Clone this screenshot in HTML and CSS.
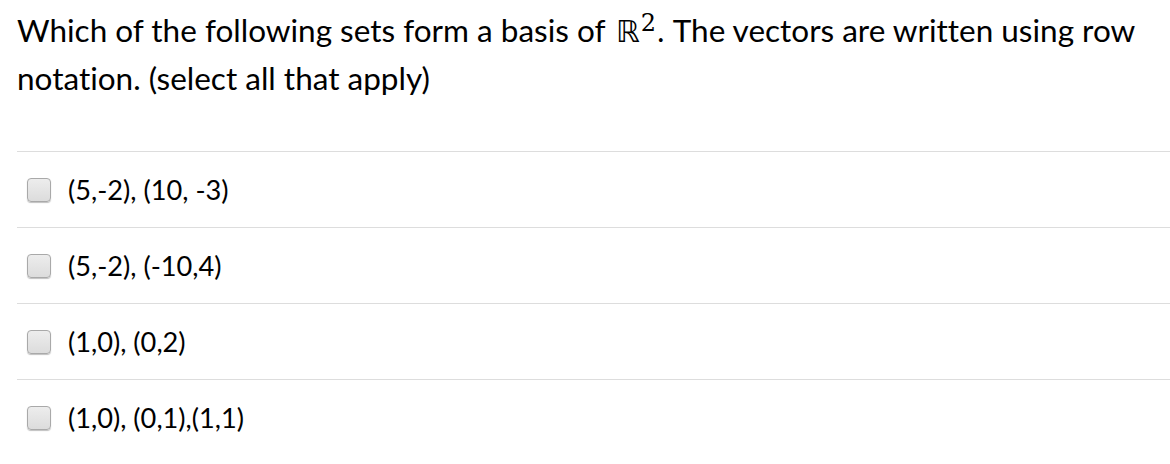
FILE: index.html
```html
<!DOCTYPE html>
<html>
<head>
<meta charset="utf-8">
<link rel="stylesheet" href="styles.css">
</head>
<body>
<div class="question">
  <p class="prompt">Which of the following sets form a basis of <span class="math"><span class="bb">ℝ</span><sup class="sup">2</sup>.</span> The vectors are written using row notation. (select all that apply)</p>
  <ul class="options">
    <li class="option"><span class="box"></span><span class="label">(5,-2), (10, -3)</span></li>
    <li class="option"><span class="box"></span><span class="label">(5,-2), (-10,4)</span></li>
    <li class="option"><span class="box"></span><span class="label">(1,0), (0,2)</span></li>
    <li class="option"><span class="box"></span><span class="label">(1,0), (0,1),(1,1)</span></li>
  </ul>
</div>
</body>
</html>
```
FILE: styles.css
```css
html, body {
  margin: 0;
  padding: 0;
  background: #fff;
}
body {
  font-family: Lato, "Liberation Sans", sans-serif;
  color: #000;
}
.question {
  padding: 6px 0 0 17px;
}
.prompt {
  margin: 0 0 49px 0;
  font-size: 31.5px;
  line-height: 48px;
  width: 1150px;
  font-variant-ligatures: none;
}
.math {
  font-family: "DejaVu Serif", "Liberation Serif", serif;
  font-size: 30px;
  line-height: 0;
  margin-left: 3px;
}
.bb {
  font-family: "DejaVu Sans", serif;
}
.sup {
  font-size: 24px;
  line-height: 0;
  vertical-align: 11px;
  margin-left: 1px;
}
.options {
  list-style: none;
  margin: 0;
  padding: 0;
}
.option {
  display: flex;
  align-items: center;
  gap: 17px;
  height: 75px;
  border-top: 1px solid #dddddd;
  padding-left: 10px;
  font-size: 27.2px;
}
.box {
  width: 22px;
  height: 22px;
  border: 1px solid #a9a9a9;
  border-radius: 4px;
  background: linear-gradient(#ededed, #dcdcdc);
  box-shadow: 0 1px 1px rgba(0,0,0,0.25);
  flex: none;
}
.label {
  line-height: 1;
}
```
